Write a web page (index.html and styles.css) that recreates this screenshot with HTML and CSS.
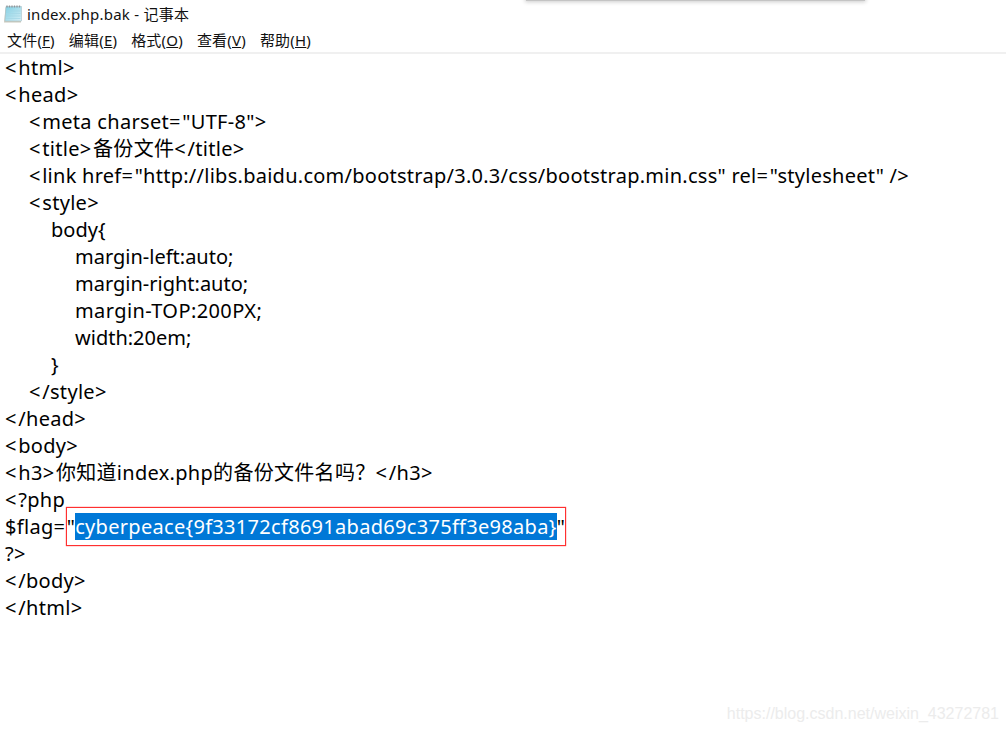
FILE: index.html
```html
<!DOCTYPE html>
<html lang="zh">
<head>
<meta charset="utf-8">
<title>index.php.bak - 记事本</title>
<link rel="stylesheet" href="styles.css">
</head>
<body>
<div class="window">
  <div class="shadow-strip"></div>
  <header class="titlebar">
    <svg class="app-icon" width="20" height="20" viewBox="0 0 20 20" aria-hidden="true">
      <defs>
        <linearGradient id="page" x1="0" y1="0" x2="1" y2="1">
          <stop offset="0" stop-color="#7fd0e4"/>
          <stop offset="1" stop-color="#d6eef5"/>
        </linearGradient>
      </defs>
      <path d="M3.500 3.500H19V18.500H2z" fill="#c9c9bd"/>
      <path d="M4 2.500H19.500V17H3z" fill="url(#page)" stroke="#a9c2cb" stroke-width="0.6"/>
      <path d="M4.500 7H18.500M4.300 9.500H18.500M4 12H18.500M3.800 14.500H18.500" stroke="#a5d7e6" stroke-width="0.8"/>
      <path d="M5 1.500v2M7.500 1.500v2M10 1.500v2M12.500 1.500v2M15 1.500v2M17.500 1.500v2" stroke="#8f9498" stroke-width="1.300"/>
    </svg>
    <span class="title-text">index.php.bak - 记事本</span>
  </header>
  <nav class="menubar">
    <span class="menu-item">文件(<u>F</u>)</span>
    <span class="menu-item">编辑(<u>E</u>)</span>
    <span class="menu-item">格式(<u>O</u>)</span>
    <span class="menu-item">查看(<u>V</u>)</span>
    <span class="menu-item">帮助(<u>H</u>)</span>
  </nav>
  <main class="editor">
    <div class="line"><span class="op">&lt;</span>html<span class="op">&gt;</span></div>
    <div class="line"><span class="op">&lt;</span>head<span class="op">&gt;</span></div>
    <div class="line i1"><span class="op">&lt;</span>meta charset<span class="op">=</span>"UTF-8"<span class="op">&gt;</span></div>
    <div class="line i1"><span class="op">&lt;</span>title<span class="op">&gt;</span>备份文件<span class="op">&lt;</span>/title<span class="op">&gt;</span></div>
    <div class="line i1 snug"><span class="op">&lt;</span>link href<span class="op">=</span>"http://libs.baidu.com/bootstrap/3.0.3/css/bootstrap.min.css" rel<span class="op">=</span>"stylesheet" /<span class="op">&gt;</span></div>
    <div class="line i1"><span class="op">&lt;</span>style<span class="op">&gt;</span></div>
    <div class="line i2 tight">body{</div>
    <div class="line i3 tight">margin-left:auto;</div>
    <div class="line i3 tight">margin-right:auto;</div>
    <div class="line i3 wide">margin-TOP:200PX;</div>
    <div class="line i3 tight">width:20em;</div>
    <div class="line i2">}</div>
    <div class="line i1"><span class="op">&lt;</span>/style<span class="op">&gt;</span></div>
    <div class="line"><span class="op">&lt;</span>/head<span class="op">&gt;</span></div>
    <div class="line"><span class="op">&lt;</span>body<span class="op">&gt;</span></div>
    <div class="line"><span class="op">&lt;</span>h3<span class="op">&gt;</span>你知道index.php的备份文件名吗？<span class="op">&lt;</span>/h3<span class="op">&gt;</span></div>
    <div class="line"><span class="op">&lt;</span>?php</div>
    <div class="line flag">$flag<span class="op">=</span>"<span class="marked"><span class="selection">cyberpeace{9f33172cf8691abad69c375ff3e98aba}</span></span>"</div>
    <div class="line">?<span class="op">&gt;</span></div>
    <div class="line"><span class="op">&lt;</span>/body<span class="op">&gt;</span></div>
    <div class="line"><span class="op">&lt;</span>/html<span class="op">&gt;</span></div>
  </main>
  <div class="watermark">https://blog.csdn.net/weixin_43272781</div>
</div>
</body>
</html>
```

FILE: styles.css
```css
* { box-sizing: border-box; }
html, body { margin: 0; padding: 0; background: #fff; }
.window {
  position: relative;
  width: 1006px;
  height: 734px;
  overflow: hidden;
  background: #fff;
  color: #000;
  font-family: "Noto Sans", "Noto Sans CJK SC", sans-serif;
}
.shadow-strip {
  position: absolute;
  top: -6px;
  left: 526px;
  width: 339px;
  height: 7px;
  background: #c4c4c4;
  box-shadow: 0 0 4px 1px rgba(0, 0, 0, 0.2);
}
.titlebar {
  display: flex;
  align-items: flex-start;
  gap: 5px;
  height: 29px;
  padding: 4px 0 0 2px;
}
.app-icon { flex: none; }
.title-text { font-size: 15px; line-height: 20px; letter-spacing: 0.25px; color: #111; }
.menubar {
  display: flex;
  gap: 14px;
  height: 25px;
  padding: 0 0 2px 7px;
  align-items: center;
  border-bottom: 2px solid #f0f0f0;
  font-size: 15px;
  letter-spacing: 0.2px;
  color: #111;
}
.editor {
  padding: 0 0 0 5px;
  font-size: 20px;
  line-height: 27px;
  letter-spacing: 0.3px;
}
.line { height: 27px; white-space: pre; }
.op { padding-right: 1.5px; }
.i1 { padding-left: 24px; }
.i2 { padding-left: 46px; }
.i3 { padding-left: 70px; }
.tight { letter-spacing: 0; }
.wide { letter-spacing: 0.4px; }
.snug { letter-spacing: 0.26px; }
.marked {
  display: inline-block;
  position: relative;
}
.marked::after {
  content: "";
  position: absolute;
  left: -9px;
  right: -9px;
  top: -6px;
  bottom: -6px;
  border: 1px solid #ff3030;
  box-shadow: 0 0 1px #ff3030;
}
.selection {
  background: #0078d7;
  color: #fff;
}
.watermark {
  position: absolute;
  right: 7px;
  top: 705px;
  font-family: "Liberation Sans", sans-serif;
  font-size: 16px;
  color: #ececec;
}
```
